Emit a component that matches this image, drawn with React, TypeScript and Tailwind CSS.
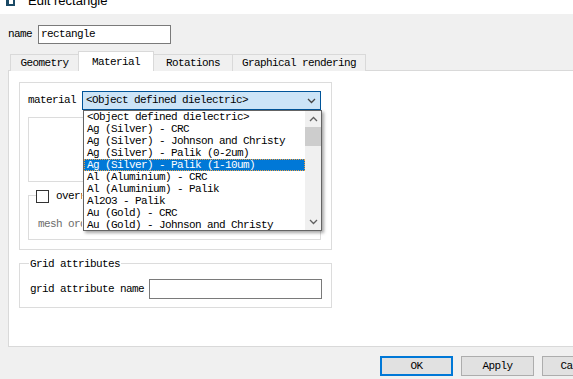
import React from 'react';

const materials = [
  '<Object defined dielectric>',
  'Ag (Silver) - CRC',
  'Ag (Silver) - Johnson and Christy',
  'Ag (Silver) - Palik (0-2um)',
  'Ag (Silver) - Palik (1-10um)',
  'Al (Aluminium) - CRC',
  'Al (Aluminium) - Palik',
  'Al2O3 - Palik',
  'Au (Gold) - CRC',
  'Au (Gold) - Johnson and Christy',
];

const selectedIndex = 4;

function Chevron({ up = false, className = '' }: { up?: boolean; className?: string }) {
  return (
    <svg width="9" height="6" viewBox="0 0 9 6" className={className}>
      <polyline
        points={up ? '1,5 4.5,1.5 8,5' : '1,1 4.5,4.5 8,1'}
        fill="none"
        stroke="currentColor"
        strokeWidth="1.3"
      />
    </svg>
  );
}

function Tab({ label, width, active = false, first = false }: { label: string; width: string; active?: boolean; first?: boolean }) {
  if (active) {
    return (
      <div
        className={`${width} h-[20px] -ml-px relative z-20 bg-white border-t border-l border-r border-[#d9d9d9] flex justify-center pt-[3px] leading-[14px]`}
      >
        {label}
      </div>
    );
  }
  return (
    <div
      className={`${width} h-[17px] ${first ? '' : '-ml-px'} relative z-10 bg-[#f0f0f0] border-t border-l border-r border-[#d9d9d9] flex items-center justify-center leading-[14px]`}
    >
      {label}
    </div>
  );
}

function MaterialList() {
  return (
    <div className="absolute left-[63px] top-[27px] w-[239px] h-[121px] z-30 bg-white border border-[#646464] shadow-[2px_2px_3px_rgba(0,0,0,0.35)] flex">
      <div className="w-[221px] flex flex-col">
        {materials.map((m, i) =>
          i === selectedIndex ? (
            <div
              key={m}
              className="h-[12px] leading-[10px] pl-[2px] bg-[#0078d7] text-white border border-dotted border-[#f0a040] whitespace-nowrap"
            >
              {m}
            </div>
          ) : (
            <div key={m} className="h-[12px] leading-[12px] pl-[3px] whitespace-nowrap">
              {m}
            </div>
          )
        )}
      </div>
      <div className="w-[16px] bg-[#f0f0f0] flex flex-col">
        <div className="h-[16px] flex items-center justify-center text-[#606060]">
          <Chevron up />
        </div>
        <div className="h-[19px] bg-[#cdcdcd]" />
        <div className="flex-1" />
        <div className="h-[16px] flex items-center justify-center text-[#606060]">
          <Chevron />
        </div>
      </div>
    </div>
  );
}

export default function App() {
  return (
    <div className="w-[573px] h-[379px] overflow-hidden bg-[#f0f0f0] flex flex-col text-black font-['Liberation_Mono',monospace] text-[11px] tracking-[-0.6px]">
      {/* title bar, mostly scrolled out of view */}
      <div className="h-[14px] shrink-0 bg-white overflow-hidden pl-[6px]">
        <div className="flex items-start gap-[13px] -mt-[7px]">
          <div className="mt-[4px] w-[9px] h-[9px] bg-[#1b4a66] flex items-center justify-center">
            <div className="w-[4px] h-[4px] bg-white" />
          </div>
          <span className="font-['Liberation_Sans',sans-serif] text-[13px] tracking-normal leading-[16px]">
            Edit rectangle
          </span>
        </div>
      </div>

      {/* name */}
      <div className="mt-[11px] pl-[8px] flex items-center gap-[6px] h-[19px] shrink-0">
        <span>name</span>
        <div className="w-[133px] h-[19px] border border-[#7a7a7a] bg-white pl-[2px] leading-[17px]">rectangle</div>
      </div>

      {/* tabs */}
      <div className="mt-[7px] pl-[10px] h-[20px] -mb-px flex items-end shrink-0">
        <Tab label="Geometry" width="w-[69px]" first />
        <Tab label="Material" width="w-[76px]" active />
        <Tab label="Rotations" width="w-[80px]" />
        <Tab label="Graphical rendering" width="w-[134px]" />
      </div>

      {/* tab pane */}
      <div className="ml-[8px] w-[600px] h-[277px] shrink-0 bg-white border border-[#d9d9d9] pl-[10px] pt-[11px]">
        <div className="relative w-[313px] h-[168px] border border-[#dcdcdc]">
          <div className="mt-[8px] pl-[8px] flex items-center gap-[6px]">
            <span>material</span>
            <div className="w-[239px] h-[19px] bg-[#cce4f7] border border-[#005499] pl-[3px] pr-[4px] flex items-center justify-between">
              <span className="leading-[17px]">{materials[0]}</span>
              <Chevron className="text-[#444]" />
            </div>
          </div>

          <div className="mt-[7px] ml-[8px] w-[293px] h-[65px] border border-[#dcdcdc]" />

          <div className="relative mt-[13px] ml-[8px] w-[293px] h-[45px] border border-[#dcdcdc]">
            <div className="absolute -top-[7px] left-[7px] flex items-center gap-[7px] bg-white">
              <div className="w-[13px] h-[13px] border border-[#333] bg-white shrink-0" />
              <span className="w-[26px] overflow-hidden leading-[14px] whitespace-nowrap">override</span>
            </div>
            <div className="mt-[20px] ml-[9px] w-[44px] overflow-hidden whitespace-nowrap text-[#6d6d6d]">mesh order</div>
          </div>

          <MaterialList />
        </div>

        <div className="relative mt-[13px] w-[313px] h-[45px] border border-[#dcdcdc]">
          <div className="absolute -top-[7px] left-[9px] bg-white px-[1px] leading-[14px]">Grid attributes</div>
          <div className="mt-[15px] pl-[10px] flex items-center gap-[5px]">
            <span>grid attribute name</span>
            <div className="w-[173px] h-[20px] border border-[#7a7a7a] bg-white" />
          </div>
        </div>
      </div>

      {/* buttons */}
      <div className="mt-[9px] pl-[380px] flex gap-[8px] shrink-0">
        <div className="w-[73px] h-[20px] shrink-0 bg-[#e1e1e1] border-2 border-[#0078d7] flex items-center justify-center">OK</div>
        <div className="w-[73px] h-[20px] shrink-0 bg-[#e1e1e1] border border-[#adadad] flex items-center justify-center">Apply</div>
        <div className="w-[73px] h-[20px] shrink-0 bg-[#e1e1e1] border border-[#adadad] flex items-center justify-center">Cancel</div>
      </div>
    </div>
  );
}
